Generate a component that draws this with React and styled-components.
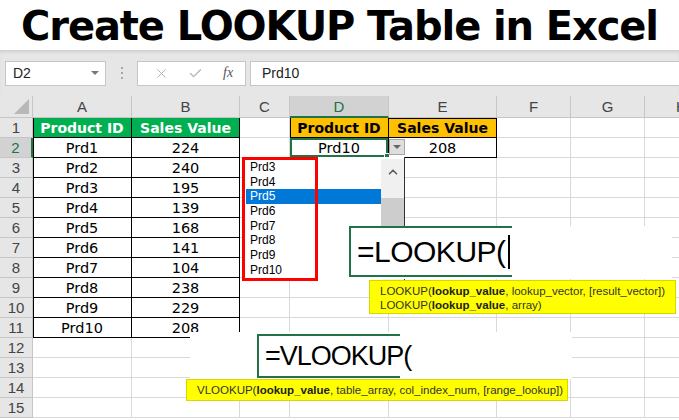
import React from "react";
import styled, { createGlobalStyle } from "styled-components";
import { X, Check, ChevronUp } from "lucide-react";

const GlobalStyle = createGlobalStyle`
  body {
    margin: 0;
    background: #fff;
  }
  * {
    box-sizing: border-box;
  }
`;

const COLS = ["A", "B", "C", "D", "E", "F", "G", "H"];
const WIDTHS = [99, 108, 50, 99, 108, 74, 74, 74];
const PRODUCTS = ["Prd1", "Prd2", "Prd3", "Prd4", "Prd5", "Prd6", "Prd7", "Prd8", "Prd9", "Prd10"];
const SALES = [224, 240, 195, 139, 168, 141, 104, 238, 229, 208];
const LIST = ["Prd3", "Prd4", "Prd5", "Prd6", "Prd7", "Prd8", "Prd9", "Prd10"];

const Page = styled.div`
  width: 679px;
  height: 420px;
  overflow: hidden;
  background: #fff;
`;

const Title = styled.h1`
  margin: 0;
  height: 50px;
  display: flex;
  align-items: center;
  justify-content: center;
  padding-top: 2px;
  font-family: "DejaVu Sans", sans-serif;
  font-weight: bold;
  font-size: 40px;
  letter-spacing: -1.1px;
  color: #000;
  white-space: nowrap;
`;

const Toolbar = styled.div`
  height: 46px;
  background: #e6e6e6;
  display: flex;
  align-items: center;
  padding-left: 5px;
  box-shadow: inset 0 3px 3px -1px rgba(0, 0, 0, 0.1);
`;

const NameBox = styled.div`
  width: 101px;
  height: 25px;
  background: #fff;
  border: 1px solid #c6c6c6;
  display: flex;
  align-items: center;
  justify-content: space-between;
  padding: 0 6px 0 7px;
  font-family: "Liberation Sans", sans-serif;
  font-size: 14px;
  color: #222;
`;

const Caret = styled.span`
  width: 0;
  height: 0;
  border-left: 4px solid transparent;
  border-right: 4px solid transparent;
  border-top: 4px solid #777;
`;

const Dots = styled.div`
  width: 31px;
  display: flex;
  flex-direction: column;
  align-items: center;
  gap: 3px;

  span {
    width: 2px;
    height: 2px;
    background: #a8a8a8;
  }
`;

const FxButtons = styled.div`
  width: 109px;
  height: 25px;
  background: #fff;
  border: 1px solid #c6c6c6;
  display: flex;
  align-items: center;
  justify-content: space-around;
  padding: 0 2px 0 6px;
`;

const Fx = styled.span`
  font-family: "Liberation Serif", serif;
  font-style: italic;
  font-size: 14px;
  color: #555;
`;

const FormulaBar = styled.div`
  flex: 1;
  margin-left: 4px;
  height: 25px;
  background: #fff;
  border: 1px solid #c6c6c6;
  border-right: none;
  display: flex;
  align-items: center;
  padding-left: 11px;
  font-family: "Liberation Sans", sans-serif;
  font-size: 14px;
  color: #222;
`;

const Sheet = styled.div`
  position: relative;
  display: grid;
  grid-template-columns: 33px ${WIDTHS.map((w) => w + "px").join(" ")};
  grid-template-rows: 22px repeat(15, 20px);
`;

const Corner = styled.div`
  background: #e6e6e6;
  border-right: 1px solid #c6c6c6;
  border-bottom: 1px solid #c6c6c6;
  display: flex;
  align-items: flex-end;
  justify-content: flex-end;
  padding: 0 3px 3px 0;

  div {
    width: 15px;
    height: 15px;
    background: #b8b8b8;
    clip-path: polygon(100% 0, 100% 100%, 0 100%);
  }
`;

const ColHead = styled.div`
  background: ${(p) => (p.$active ? "#d2d2d2" : "#e6e6e6")};
  border-right: 1px solid #c6c6c6;
  border-bottom: ${(p) => (p.$active ? "2px solid #217346" : "1px solid #c6c6c6")};
  color: ${(p) => (p.$active ? "#217346" : "#444")};
  display: flex;
  align-items: center;
  justify-content: center;
  font-family: "Liberation Sans", sans-serif;
  font-size: 15px;
`;

const RowHead = styled.div`
  background: ${(p) => (p.$active ? "#d2d2d2" : "#e6e6e6")};
  border-bottom: 1px solid #c6c6c6;
  border-right: ${(p) => (p.$active ? "2px solid #217346" : "1px solid #c6c6c6")};
  color: ${(p) => (p.$active ? "#217346" : "#444")};
  display: flex;
  align-items: center;
  justify-content: center;
  font-family: "Liberation Sans", sans-serif;
  font-size: 15px;
`;

const Cell = styled.div`
  position: relative;
  background: ${(p) => p.$bg || "#fff"};
  color: ${(p) => p.$color || "#000"};
  border-right: 1px solid ${(p) => (p.$table ? "#000" : "#d9d9d9")};
  border-bottom: 1px solid ${(p) => (p.$table ? "#000" : "#d9d9d9")};
  box-shadow: ${(p) =>
    [
      p.$left && "inset 1px 0 0 #000",
      p.$top && "inset 0 1px 0 #000",
      p.$selected && "inset 0 0 0 2px #217346",
    ]
      .filter(Boolean)
      .join(", ") || "none"};
  display: flex;
  align-items: center;
  justify-content: center;
  padding-top: 1px;
  font-family: "DejaVu Sans", sans-serif;
  font-size: ${(p) => (p.$bold ? "14px" : "14.5px")};
  font-weight: ${(p) => (p.$bold ? "bold" : "normal")};
  white-space: nowrap;

  ${(p) =>
    p.$selected &&
    `
    &::after {
      content: "";
      position: absolute;
      right: -3px;
      bottom: -3px;
      width: 5px;
      height: 5px;
      background: #217346;
      border: 1px solid #fff;
    }
  `}
`;

const DropButton = styled.div`
  position: absolute;
  left: 389px;
  top: 43px;
  width: 16px;
  height: 16px;
  background: #dedede;
  border: 1px solid #a6a6a6;
  display: flex;
  align-items: center;
  justify-content: center;
  z-index: 2;

  span {
    width: 0;
    height: 0;
    border-left: 4px solid transparent;
    border-right: 4px solid transparent;
    border-top: 4px solid #666;
  }
`;

const ListBox = styled.div`
  position: absolute;
  left: 243px;
  top: 61px;
  width: 162px;
  height: 124px;
  background: #fff;
  border-right: 1px solid #333;
  display: flex;
  padding-left: 3px;
  z-index: 3;
`;

const Items = styled.div`
  flex: 1;
  padding-top: 3px;
`;

const Item = styled.div`
  height: 14.7px;
  line-height: 14.7px;
  padding-left: 4px;
  font-family: "Liberation Sans", sans-serif;
  font-size: 12px;
  background: ${(p) => (p.$active ? "#0078d7" : "transparent")};
  color: ${(p) => (p.$active ? "#fff" : "#000")};
`;

const Scrollbar = styled.div`
  width: 23px;
  margin-top: 2px;
  background: #f0f0f0;
  display: flex;
  flex-direction: column;
`;

const ScrollArrow = styled.div`
  height: 26px;
  display: flex;
  align-items: center;
  justify-content: center;
`;

const Thumb = styled.div`
  margin-top: 13px;
  height: 40px;
  background: #cdcdcd;
`;

const RedMark = styled.div`
  position: absolute;
  left: -1px;
  top: 0;
  width: 76px;
  height: 124px;
  border: 3px solid #ff0000;
`;

const EditOverlay = styled.div`
  position: absolute;
  left: ${(p) => p.$x}px;
  top: ${(p) => p.$y}px;
  width: ${(p) => p.$w}px;
  height: ${(p) => p.$h}px;
  background: #fff;
  padding: ${(p) => p.$pad};
  z-index: 4;
`;

const EditBox = styled.div`
  width: ${(p) => p.$w}px;
  height: ${(p) => p.$h}px;
  border: 2px solid #217346;
  border-right: none;
  display: flex;
  align-items: center;
  padding-left: 6px;
  font-family: "Liberation Sans", sans-serif;
  font-size: ${(p) => p.$size}px;
  letter-spacing: ${(p) => p.$spacing || "-0.5px"};
  color: #000;
  white-space: nowrap;
  overflow: visible;
`;

const Caret2 = styled.span`
  display: inline-block;
  width: 2px;
  height: ${(p) => p.$h}px;
  margin-left: 2px;
  background: #000;
`;

const Tip = styled.div`
  position: absolute;
  left: ${(p) => p.$x}px;
  top: ${(p) => p.$y}px;
  width: ${(p) => p.$w}px;
  height: ${(p) => p.$h}px;
  background: #ffff00;
  border: 1px solid #d8d800;
  padding: 3px 10px;
  font-family: "Liberation Sans", sans-serif;
  font-size: 11.5px;
  line-height: 14px;
  color: #333;
  white-space: nowrap;
  z-index: 5;

  b {
    color: #222;
  }
`;

function cellFor(r, c) {
  const col = COLS[c];
  if (r === 1 && (col === "A" || col === "B")) {
    return {
      text: col === "A" ? "Product ID" : "Sales Value",
      $bg: "#00b050",
      $color: "#fff",
      $bold: true,
      $table: true,
      $left: col === "A",
    };
  }
  if (r >= 2 && r <= 11 && (col === "A" || col === "B")) {
    return {
      text: col === "A" ? PRODUCTS[r - 2] : SALES[r - 2],
      $table: true,
      $left: col === "A",
    };
  }
  if (r === 1 && (col === "D" || col === "E")) {
    return {
      text: col === "D" ? "Product ID" : "Sales Value",
      $bg: "#ffc000",
      $bold: true,
      $table: true,
      $left: col === "D",
      $top: col === "E",
    };
  }
  if (r === 2 && col === "D") {
    return { text: "Prd10", $table: true, $selected: true };
  }
  if (r === 2 && col === "E") {
    return { text: "208", $table: true };
  }
  return { text: "" };
}

const App = () => {
  const rows = Array.from({ length: 15 }, (_, i) => i + 1);

  return (
    <Page>
      <GlobalStyle />
      <Title>Create LOOKUP Table in Excel</Title>

      <Toolbar>
        <NameBox>
          D2
          <Caret />
        </NameBox>
        <Dots>
          <span />
          <span />
          <span />
        </Dots>
        <FxButtons>
          <X size={15} color="#b4b4b4" strokeWidth={1.6} />
          <Check size={15} color="#b4b4b4" strokeWidth={2.2} />
          <Fx>fx</Fx>
        </FxButtons>
        <FormulaBar>Prd10</FormulaBar>
      </Toolbar>

      <Sheet>
        <Corner>
          <div />
        </Corner>
        {COLS.map((c) => (
          <ColHead key={c} $active={c === "D"}>
            {c}
          </ColHead>
        ))}

        {rows.map((r) => (
          <React.Fragment key={r}>
            <RowHead $active={r === 2}>{r}</RowHead>
            {COLS.map((c, ci) => {
              const { text, ...props } = cellFor(r, ci);
              return (
                <Cell key={c} {...props}>
                  {text}
                </Cell>
              );
            })}
          </React.Fragment>
        ))}

        <DropButton>
          <span />
        </DropButton>

        <ListBox>
          <Items>
            {LIST.map((item) => (
              <Item key={item} $active={item === "Prd5"}>
                {item}
              </Item>
            ))}
          </Items>
          <Scrollbar>
            <ScrollArrow>
              <ChevronUp size={14} color="#606060" strokeWidth={3} />
            </ScrollArrow>
            <Thumb />
          </Scrollbar>
          <RedMark />
        </ListBox>

        <EditOverlay $x={349} $y={130} $w={323} $h={53} $pad="0">
          <EditBox $w={163} $h={51} $size={30}>
            =LOOKUP(
            <Caret2 $h={34} />
          </EditBox>
        </EditOverlay>
        <Tip $x={369} $y={184} $w={307} $h={34}>
          LOOKUP(<b>lookup_value</b>, lookup_vector, [result_vector])
          <br />
          LOOKUP(<b>lookup_value</b>, array)
        </Tip>

        <EditOverlay $x={190} $y={236} $w={382} $h={47} $pad="2px 0 0 67px">
          <EditBox $w={143} $h={44} $size={27} $spacing="-1px">
            =VLOOKUP(
            <Caret2 $h={30} />
          </EditBox>
        </EditOverlay>
        <Tip $x={186} $y={283} $w={382} $h={22}>
          VLOOKUP(<b>lookup_value</b>, table_array, col_index_num, [range_lookup])
        </Tip>
      </Sheet>
    </Page>
  );
};

export default App;
